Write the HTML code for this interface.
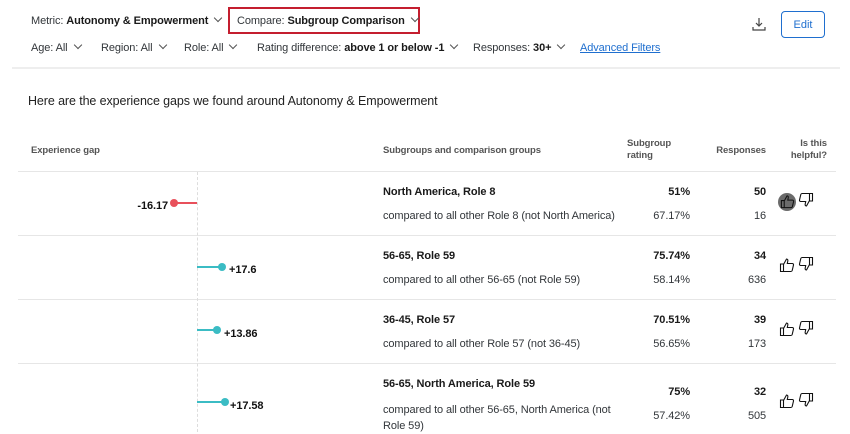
<!DOCTYPE html>
<html><head><style>
*{margin:0;padding:0;box-sizing:border-box}
body{width:850px;height:425px;overflow:hidden;background:#fff;font-family:"Liberation Sans",sans-serif;color:#32363a;position:relative}
.a{position:absolute;white-space:nowrap}
.f{font-size:11px;letter-spacing:-0.1px}
b{font-weight:bold;color:#1a1a1a}
.ch{display:inline-block;width:6px;height:6px;border-right:1px solid #555;border-bottom:1px solid #555;transform:rotate(45deg);margin:0 0 3px 7px}
.hd{font-size:9.5px;font-weight:bold;color:#555;letter-spacing:-0.1px}
.hr{position:absolute;left:18px;width:818px;height:1px;background:#e6e6e6}
.r{text-align:right}
.dot{position:absolute;width:8px;height:8px;border-radius:50%}
</style></head><body>
<div class="a f" style="left:31px;top:15px">Metric: <b>Autonomy &amp; Empowerment</b><span class="ch"></span></div>
<div class="a" style="left:228px;top:7px;width:192px;height:27px;border:2px solid #c41e2f"></div>
<div class="a f" style="left:237px;top:15px">Compare: <b>Subgroup Comparison</b><span class="ch"></span></div>
<div class="a f" style="left:31px;top:42px">Age: All<span class="ch"></span></div>
<div class="a f" style="left:101px;top:42px">Region: All<span class="ch"></span></div>
<div class="a f" style="left:184px;top:42px">Role: All<span class="ch"></span></div>
<div class="a f" style="left:257px;top:42px">Rating difference: <b>above 1 or below -1</b><span class="ch"></span></div>
<div class="a f" style="left:473px;top:42px">Responses: <b>30+</b><span class="ch"></span></div>
<div class="a f" style="left:580px;top:42px;color:#1f6fcf;text-decoration:underline">Advanced Filters</div>
<svg class="a" style="left:752px;top:17px" width="14" height="14" viewBox="0 0 14 14" fill="none" stroke="#444" stroke-width="1.2"><path d="M7 1v8M4 6l3 3 3-3M1 10v3h12v-3"/></svg>
<div class="a" style="left:781px;top:11px;width:44px;height:27px;border:1px solid #1f6fcf;border-radius:4px;color:#1f6fcf;font-size:11px;text-align:center;line-height:26px">Edit</div>
<div class="a" style="left:12px;top:67px;width:828px;height:2px;background:#eee"></div>
<div class="a" style="left:28px;top:94px;font-size:12.5px;letter-spacing:-0.1px;color:#222">Here are the experience gaps we found around Autonomy &amp; Empowerment</div>
<div class="a hd" style="left:31px;top:145px">Experience gap</div>
<div class="a hd" style="left:383px;top:145px">Subgroups and comparison groups</div>
<div class="a hd" style="left:627px;top:138px;line-height:12px">Subgroup<br>rating</div>
<div class="a hd r" style="left:706px;width:60px;top:145px">Responses</div>
<div class="a hd r" style="left:770px;width:57px;top:138px;line-height:12px">Is this<br>helpful?</div>
<div class="hr" style="top:171px"></div><div class="hr" style="top:235px"></div><div class="hr" style="top:299px"></div><div class="hr" style="top:363px"></div>
<div class="a" style="left:197px;top:172px;height:260px;border-left:1px dashed #ddd"></div>
<div class="a" style="left:174px;top:202px;width:23px;height:2px;background:#e8505b"></div><div class="dot" style="left:170px;top:199px;background:#e8505b"></div>
<div class="a f" style="left:100px;width:68px;top:200px;text-align:right;font-weight:bold;color:#111">-16.17</div>
<div class="a" style="left:197px;top:266px;width:25px;height:2px;background:#3bbcc4"></div><div class="dot" style="left:218px;top:263px;background:#3bbcc4"></div>
<div class="a f" style="left:229px;top:264px;font-weight:bold;color:#111">+17.6</div>
<div class="a" style="left:197px;top:329px;width:20px;height:2px;background:#3bbcc4"></div><div class="dot" style="left:213px;top:326px;background:#3bbcc4"></div>
<div class="a f" style="left:224px;top:328px;font-weight:bold;color:#111">+13.86</div>
<div class="a" style="left:197px;top:401px;width:28px;height:2px;background:#3bbcc4"></div><div class="dot" style="left:221px;top:398px;background:#3bbcc4"></div>
<div class="a f" style="left:230px;top:400px;font-weight:bold;color:#111">+17.58</div>
<div class="a f" style="left:383px;top:186px"><b>North America, Role 8</b></div>
<div class="a f" style="left:383px;top:210px">compared to all other Role 8 (not North America)</div>
<div class="a f r" style="left:600px;width:90px;top:186px"><b>51%</b></div>
<div class="a f r" style="left:600px;width:90px;top:210px">67.17%</div>
<div class="a f r" style="left:706px;width:60px;top:186px"><b>50</b></div>
<div class="a f r" style="left:706px;width:60px;top:210px">16</div>
<div class="a f" style="left:383px;top:250px"><b>56-65, Role 59</b></div>
<div class="a f" style="left:383px;top:274px">compared to all other 56-65 (not Role 59)</div>
<div class="a f r" style="left:600px;width:90px;top:250px"><b>75.74%</b></div>
<div class="a f r" style="left:600px;width:90px;top:274px">58.14%</div>
<div class="a f r" style="left:706px;width:60px;top:250px"><b>34</b></div>
<div class="a f r" style="left:706px;width:60px;top:274px">636</div>
<div class="a f" style="left:383px;top:314px"><b>36-45, Role 57</b></div>
<div class="a f" style="left:383px;top:338px">compared to all other Role 57 (not 36-45)</div>
<div class="a f r" style="left:600px;width:90px;top:314px"><b>70.51%</b></div>
<div class="a f r" style="left:600px;width:90px;top:338px">56.65%</div>
<div class="a f r" style="left:706px;width:60px;top:314px"><b>39</b></div>
<div class="a f r" style="left:706px;width:60px;top:338px">173</div>
<div class="a f" style="left:383px;top:378px"><b>56-65, North America, Role 59</b></div>
<div class="a f" style="left:383px;top:402px;line-height:16px">compared to all other 56-65, North America (not<br>Role 59)</div>
<div class="a f r" style="left:600px;width:90px;top:386px"><b>75%</b></div>
<div class="a f r" style="left:600px;width:90px;top:410px">57.42%</div>
<div class="a f r" style="left:706px;width:60px;top:386px"><b>32</b></div>
<div class="a f r" style="left:706px;width:60px;top:410px">505</div>
<svg width="0" height="0" style="position:absolute"><defs>
<symbol id="up" viewBox="0 0 16 16"><path d="M1.5 7h3v7.5h-3zM4.5 7.5l3-5.5c1 0 1.6.8 1.3 2L8.3 6.5h5c.8 0 1.4.8 1.2 1.5l-1.3 5.5c-.2.6-.7 1-1.3 1H4.5" fill="none" stroke="#111" stroke-width="1.1"/></symbol>
<symbol id="dn" viewBox="0 0 16 16"><g transform="rotate(180 8 8)"><path d="M1.5 7h3v7.5h-3zM4.5 7.5l3-5.5c1 0 1.6.8 1.3 2L8.3 6.5h5c.8 0 1.4.8 1.2 1.5l-1.3 5.5c-.2.6-.7 1-1.3 1H4.5" fill="none" stroke="#111" stroke-width="1.1"/></g></symbol>
</defs></svg>
<div class="a" style="left:778px;top:193px;width:18px;height:18px;border-radius:50%;background:#6b6b6b"></div>
<svg class="a" style="left:780px;top:194px" width="15" height="15"><use href="#up"/></svg>
<svg class="a" style="left:798px;top:192px" width="16" height="16"><use href="#dn"/></svg>
<svg class="a" style="left:779px;top:257px" width="16" height="16"><use href="#up"/></svg>
<svg class="a" style="left:798px;top:256px" width="16" height="16"><use href="#dn"/></svg>
<svg class="a" style="left:779px;top:321px" width="16" height="16"><use href="#up"/></svg>
<svg class="a" style="left:798px;top:320px" width="16" height="16"><use href="#dn"/></svg>
<svg class="a" style="left:779px;top:393px" width="16" height="16"><use href="#up"/></svg>
<svg class="a" style="left:798px;top:392px" width="16" height="16"><use href="#dn"/></svg>
</body></html>
